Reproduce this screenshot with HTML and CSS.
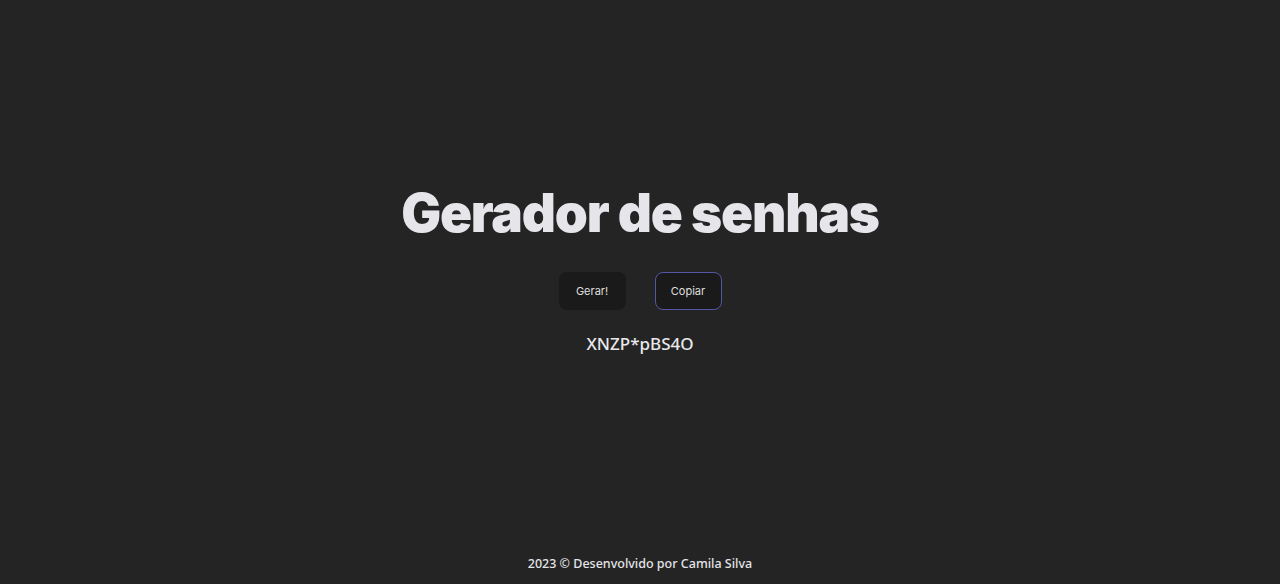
FILE: index.html
```html
<!DOCTYPE html>
<html lang="pt-BR">
<head>
<meta charset="utf-8">
<title>Gerador de senhas</title>
<link rel="stylesheet" href="styles.css">
</head>
<body>
<main class="app">
  <h1 class="title">Gerador de senhas</h1>
  <div class="actions">
    <button class="btn">Gerar!</button>
    <button class="btn btn-active">Copiar</button>
  </div>
  <p class="password">XNZP*pBS4O</p>
</main>
<footer class="footer">2023 © Desenvolvido por Camila Silva</footer>
</body>
</html>
```

FILE: styles.css
```css
html, body {
  margin: 0;
  padding: 0;
  height: 100%;
}
body {
  background: #242424;
  color: rgba(255,255,255,0.87);
  font-family: "Noto Sans", sans-serif;
  display: flex;
  flex-direction: column;
  height: 584px;
  overflow: hidden;
}
.app {
  flex: 1;
  display: flex;
  flex-direction: column;
  align-items: center;
  padding-top: 180px;
}
.title {
  margin: 0;
  font-family: "Inter", sans-serif;
  font-weight: 900;
  font-size: 53px;
  line-height: 66px;
  color: #e6e6ea;
  letter-spacing: -1.2px;
}
.actions {
  display: flex;
  gap: 29px;
  margin-top: 26px;
}
.btn {
  width: 67px;
  height: 38px;
  border-radius: 8px;
  border: 1.5px solid transparent;
  background: #1a1a1a;
  color: rgba(255,255,255,0.87);
  font-family: "Inter", sans-serif;
  font-size: 11px;
  padding: 0;
}
.btn-active {
  border-color: #5456a6;
}
.password {
  margin: 22px 0 0;
  font-family: "Noto Sans", sans-serif;
  font-size: 17px;
  font-weight: 500;
  color: #e8e8ec;
}
.footer {
  text-align: center;
  font-size: 12.5px;
  font-weight: 500;
  color: #e4e4e8;
  padding-bottom: 12px;
}
```
